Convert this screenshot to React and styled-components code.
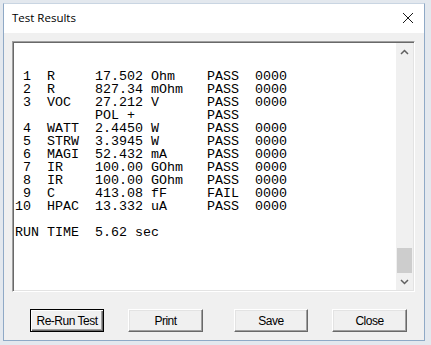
import React from "react";
import styled, { createGlobalStyle } from "styled-components";

const GlobalStyle = createGlobalStyle`
  html, body {
    margin: 0;
    padding: 0;
    background: #e3e8ee;
  }
  body {
    width: 431px;
    height: 345px;
    overflow: hidden;
  }
`;

const lines = [
  "",
  "",
  " 1  R     17.502 Ohm    PASS  0000",
  " 2  R     827.34 mOhm   PASS  0000",
  " 3  VOC   27.212 V      PASS  0000",
  "          POL +         PASS",
  " 4  WATT  2.4450 W      PASS  0000",
  " 5  STRW  3.3945 W      PASS  0000",
  " 6  MAGI  52.432 mA     PASS  0000",
  " 7  IR    100.00 GOhm   PASS  0000",
  " 8  IR    100.00 GOhm   PASS  0000",
  " 9  C     413.08 fF     FAIL  0000",
  "10  HPAC  13.332 uA     PASS  0000",
  "",
  "RUN TIME  5.62 sec",
];

const buttons = [
  { label: "Re-Run Test", gap: 0, width: 74, isDefault: true },
  { label: "Print", gap: 24, width: 75 },
  { label: "Save", gap: 31, width: 74 },
  { label: "Close", gap: 24, width: 75 },
];

const App = () => {
  return (
    <>
      <GlobalStyle />
      <Window>
        <TitleBar>
          <Title>Test Results</Title>
          <CloseIcon width="12" height="12" viewBox="0 0 12 12">
            <path d="M1 1 L11 11 M11 1 L1 11" stroke="#1a1a1a" strokeWidth="1" fill="none" />
          </CloseIcon>
        </TitleBar>
        <Client>
          <Edit>
            <Output>{lines.join("\n")}</Output>
            <ScrollBar>
              <ArrowBox>
                <svg width="9" height="6" viewBox="0 0 9 6">
                  <polyline points="1,5 4.5,1.5 8,5" stroke="#606060" strokeWidth="1.5" fill="none" />
                </svg>
              </ArrowBox>
              <Track>
                <Thumb />
              </Track>
              <ArrowBox>
                <svg width="9" height="6" viewBox="0 0 9 6">
                  <polyline points="1,1 4.5,4.5 8,1" stroke="#606060" strokeWidth="1.5" fill="none" />
                </svg>
              </ArrowBox>
            </ScrollBar>
          </Edit>
          <ButtonRow>
            {buttons.map((b) => (
              <Button key={b.label} $gap={b.gap} $width={b.width} $default={b.isDefault}>
                {b.label}
              </Button>
            ))}
          </ButtonRow>
        </Client>
      </Window>
    </>
  );
};

const Window = styled.div`
  margin: 3px 0 0 3px;
  width: 420px;
  height: 336px;
  border: 1px solid #8fa9c6;
  border-top-color: #c9d5e2;
  display: flex;
  flex-direction: column;
  background: #f0f0f0;
`;

const TitleBar = styled.div`
  height: 29px;
  flex-shrink: 0;
  background: #ffffff;
  display: flex;
  align-items: center;
  justify-content: space-between;
  padding: 0 8px 2px 8px;
  box-sizing: border-box;
`;

const Title = styled.span`
  font-family: "Open Sans", "Liberation Sans", sans-serif;
  font-size: 11.5px;
  color: #000;
`;

const CloseIcon = styled.svg`
  margin-right: 2px;
`;

const Client = styled.div`
  flex: 1;
  display: flex;
  flex-direction: column;
  padding: 8px 9px 0 8px;
`;

const Edit = styled.div`
  height: 247px;
  display: flex;
  background: #ffffff;
  border: 1px solid;
  border-color: #a0a0a0 #ffffff #ffffff #a0a0a0;
  box-shadow: inset 1px 1px 0 #696969, inset -1px -1px 0 #e3e3e3;
  padding: 1px;
`;

const Output = styled.pre`
  flex: 1;
  margin: 0;
  padding: 1px 0 0 1px;
  font-family: "Liberation Mono", "Courier New", monospace;
  font-size: 13.33px;
  line-height: 13px;
  color: #000;
  white-space: pre;
  overflow: hidden;
`;

const ScrollBar = styled.div`
  width: 17px;
  display: flex;
  flex-direction: column;
  background: #f0f0f0;
`;

const ArrowBox = styled.div`
  height: 17px;
  display: flex;
  align-items: center;
  justify-content: center;
`;

const Track = styled.div`
  flex: 1;
  display: flex;
  flex-direction: column;
  justify-content: flex-end;
  padding: 0 1px 0 1px;
`;

const Thumb = styled.div`
  height: 25px;
  background: #cdcdcd;
`;

const ButtonRow = styled.div`
  display: flex;
  padding-left: 18px;
  margin-top: 17px;
`;

const Button = styled.button`
  margin-left: ${(p) => p.$gap}px;
  width: ${(p) => p.$width}px;
  height: 23px;
  padding: 0;
  background: #f0f0f0;
  font-family: "Liberation Sans", Arial, sans-serif;
  font-size: 12px;
  letter-spacing: -0.5px;
  color: #000;
  border: 1px solid;
  border-color: ${(p) => (p.$default ? "#000" : "#ffffff #696969 #696969 #ffffff")};
  box-shadow: ${(p) =>
    p.$default
      ? "inset 1px 1px 0 #ffffff, inset -1px -1px 0 #696969, inset -2px -2px 0 #a0a0a0"
      : "inset -1px -1px 0 #a0a0a0, inset 1px 1px 0 #e3e3e3"};
`;

export default App;
